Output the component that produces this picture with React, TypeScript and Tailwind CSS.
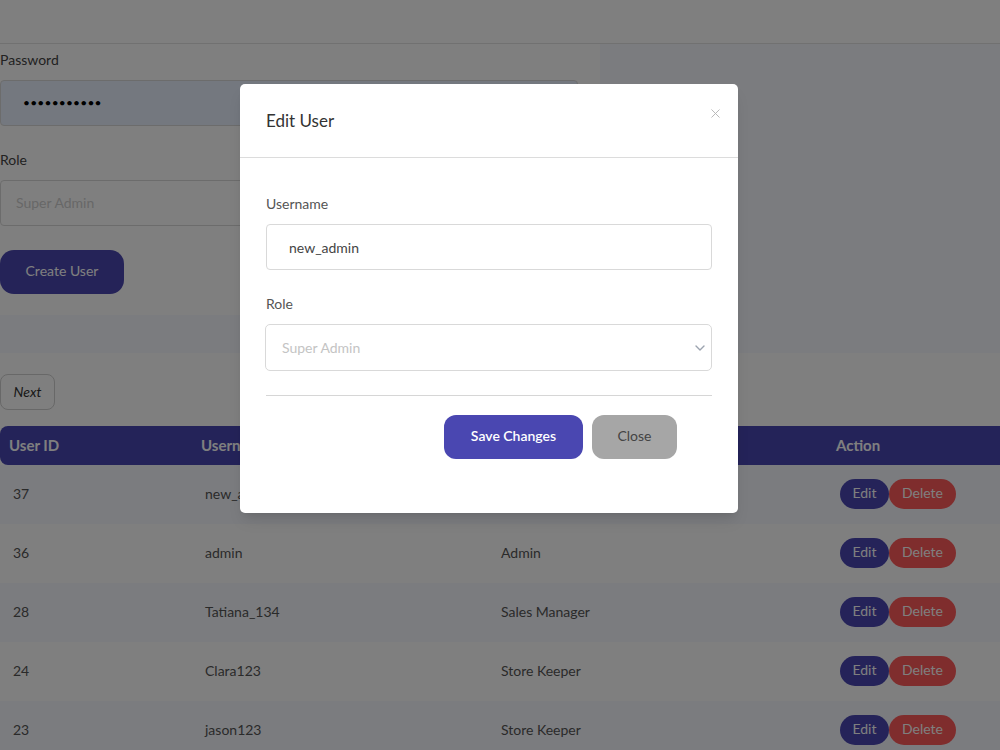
import { X } from "lucide-react";

type Row = { id: number; username: string; role: string };

const ROWS: Row[] = [
  { id: 37, username: "new_admin", role: "Super Admin" },
  { id: 36, username: "admin", role: "Admin" },
  { id: 28, username: "Tatiana_134", role: "Sales Manager" },
  { id: 24, username: "Clara123", role: "Store Keeper" },
  { id: 23, username: "jason123", role: "Store Keeper" },
];

function Chevron() {
  return (
    <svg width="10" height="6" viewBox="0 0 10 6" fill="none">
      <path d="M1 1l4 4 4-4" stroke="#9ca3af" strokeWidth="1.4" strokeLinecap="round" strokeLinejoin="round" />
    </svg>
  );
}

function EditUserModal() {
  return (
    <div className="absolute inset-0 z-50 bg-black/50">
      <div className="absolute left-[240px] top-[84px] w-[498px] h-[429px] bg-white rounded-[5px] shadow-lg">
        {/* Header */}
        <div className="relative h-[74px] flex items-center px-[26px] border-b border-[#dcdcdc]">
          <h2 className="text-[17px] text-[#333]">Edit User</h2>
          <button className="absolute right-[15px] top-[22px] text-[#b5b5b5]">
            <X size={15} strokeWidth={1.5} />
          </button>
        </div>

        {/* Body */}
        <div className="px-[26px] pt-[36px]">
          <label className="block text-[14px] leading-[20px] text-[#555]">Username</label>
          <div className="mt-[10px] h-[46px] w-[446px] flex items-center px-[22px] border border-[#d9d9d9] rounded-[4px] text-[14px] text-[#444]">
            new_admin
          </div>

          <label className="block mt-[24px] text-[14px] leading-[20px] text-[#555]">Role</label>
          <div className="mt-[10px] h-[47px] w-[447px] -ml-px flex items-center justify-between pl-[16px] pr-[6px] border border-[#d9d9d9] rounded-[5px] text-[14px] text-[#c4c4c4]">
            <span>Super Admin</span>
            <Chevron />
          </div>

          <div className="mt-[24px] border-t border-[#d6d6d6]" />

          <div className="mt-[19px] flex justify-end gap-[9px] pr-[35px]">
            <button className="h-[44px] w-[139px] pb-[3px] rounded-[12px] bg-[#4a47b1] text-white text-[14px] font-semibold">
              Save Changes
            </button>
            <button className="h-[44px] w-[85px] pb-[3px] rounded-[12px] bg-[#a6a6a6] text-[#444] text-[14px]">
              Close
            </button>
          </div>
        </div>
      </div>
    </div>
  );
}

export default function App() {
  return (
    <div className="relative w-[1000px] h-[750px] overflow-hidden bg-white font-[family-name:Lato,sans-serif]">
      {/* Top bar */}
      <div className="h-[44px] bg-white border-b border-[#e2e2e2]" />

      {/* Create user form area */}
      <div className="h-[309px] bg-[#f6f8fe]">
        <div className="w-[600px] h-[271px] bg-white pt-[6px]">
          <label className="block text-[14px] leading-[20px] text-[#444]">Password</label>
          <div className="mt-[10px] h-[46px] w-[578px] flex items-center px-[22px] bg-[#e8f0fe] border border-[#d9d9d9] rounded-[4px] text-[12px] tracking-[0.2px] text-black">
            •••••••••••
          </div>

          <label className="block mt-[24px] text-[14px] leading-[20px] text-[#444]">Role</label>
          <div className="mt-[10px] h-[46px] w-[578px] flex items-center px-[15px] pb-[2px] border border-[#d9d9d9] rounded-[4px] text-[14px] text-[#cfcfcf]">
            Super Admin
          </div>

          <button className="mt-[24px] h-[44px] w-[124px] pb-[3px] rounded-[14px] bg-[#4a47b1] text-white text-[14px]">
            Create User
          </button>
        </div>
      </div>

      {/* Pagination */}
      <div className="mt-[21px]">
        <button className="h-[36px] w-[55px] pb-[2px] rounded-[8px] border border-[#d0d0d0] text-[14px] italic text-[#333]">
          Next
        </button>
      </div>

      {/* Users table */}
      <div className="mt-[16px]">
        <div className="grid grid-cols-[192px_300px_335px_173px] h-[39px] items-center bg-[#4846b3] rounded-l-[8px] text-white text-[15px] font-bold">
          <div className="px-[9px]">User ID</div>
          <div className="px-[9px]">Username</div>
          <div className="px-[9px]">Role</div>
          <div className="px-[9px]">Action</div>
        </div>
        {ROWS.map((row, i) => (
          <div
            key={row.id}
            className={`grid grid-cols-[192px_300px_335px_173px] h-[59px] pb-[2px] items-center text-[14px] text-[#555] ${
              i % 2 === 0 ? "bg-[#f6f8fe]" : "bg-white"
            }`}
          >
            <div className="px-[13px]">{row.id}</div>
            <div className="px-[13px]">{row.username}</div>
            <div className="px-[9px]">{row.role}</div>
            <div className="px-[13px] flex">
              <button className="h-[30px] w-[49px] pb-[2px] rounded-full bg-[#4a47b3] text-white text-[14px]">Edit</button>
              <button className="h-[30px] w-[67px] pb-[2px] rounded-full bg-[#ff5a5a] text-white text-[14px]">Delete</button>
            </div>
          </div>
        ))}
      </div>

      <EditUserModal />
    </div>
  );
}
